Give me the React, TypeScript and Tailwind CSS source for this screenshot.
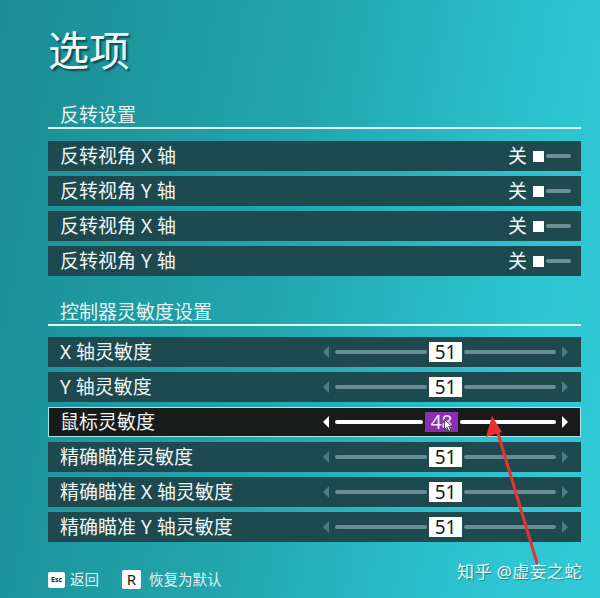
import React from "react";

const FONT = { fontFamily: '"Noto Sans", "Noto Sans CJK SC", sans-serif' };

function SectionHeader({ title }: { title: string }) {
  return (
    <div className="border-b-2 border-[#e6f4f4] pl-[12px] pr-[20px]">
      <div className="text-[19px] leading-[24px] text-[#e8f3f3]">{title}</div>
    </div>
  );
}

function Toggle() {
  return (
    <div className="flex items-center">
      <span className="text-[19px] leading-none text-[#eef5f5]">关</span>
      <span className="ml-[6px] h-[11px] w-[11px] bg-white" />
      <span className="ml-[2px] h-[4px] w-[25px] rounded-sm bg-[#6f8f90]" />
    </div>
  );
}

function ToggleRow({ label }: { label: string }) {
  return (
    <div className="flex h-[30px] items-center justify-between bg-[#1e4a4f] pl-[12px] pr-[10px]">
      <span className="text-[19px] leading-none text-[#eef5f5]">{label}</span>
      <Toggle />
    </div>
  );
}

function Arrow({ dir, color }: { dir: "l" | "r"; color: string }) {
  return (
    <svg width="6" height="12" viewBox="0 0 6 12" className="shrink-0">
      {dir === "l" ? (
        <polygon points="6,0 0,6 6,12" fill={color} />
      ) : (
        <polygon points="0,0 6,6 0,12" fill={color} />
      )}
    </svg>
  );
}

function Slider({ value, active }: { value: number; active?: boolean }) {
  const arrow = active ? "#ffffff" : "#4f7c80";
  const track = active ? "bg-white" : "bg-[#6a8c8e]";
  return (
    <div className="flex items-center">
      <Arrow dir="l" color={arrow} />
      <div className="ml-[6px] flex w-[221px] items-center">
        <div
          className={`h-[4px] rounded-sm ${track} ${active ? "w-[88px]" : "w-[92px]"}`}
        />
        {active ? (
          <div className="relative mx-[2px] flex h-[20px] w-[33px] items-center justify-center bg-[#8a2fb4] text-[19px] leading-none text-[#f0e6f7]">
            {value}
            <svg
              width="9"
              height="13"
              viewBox="0 0 9 13"
              className="absolute left-[19px] top-[7px]"
            >
              <polygon
                points="0.5,0.5 0.5,10.5 3,8.3 4.8,12.3 6.6,11.5 4.8,7.6 8,7.6"
                fill="#ffffff"
                stroke="#222"
                strokeWidth="0.8"
              />
            </svg>
          </div>
        ) : (
          <div className="mx-[2px] flex h-[20px] w-[33px] items-center justify-center bg-white text-[19px] leading-none text-[#1d1d1d]">
            {value}
          </div>
        )}
        <div className={`h-[4px] flex-1 rounded-sm ${track}`} />
      </div>
      <div className="ml-[6px]">
        <Arrow dir="r" color={arrow} />
      </div>
    </div>
  );
}

function SliderRow({
  label,
  value,
  active,
}: {
  label: string;
  value: number;
  active?: boolean;
}) {
  return (
    <div
      className={`flex h-[30px] items-center justify-between ${
        active
          ? "border border-[#a9e6ea] bg-[#191b1b] pl-[11px] pr-[12px]"
          : "bg-[#1e4a4f] pl-[12px] pr-[13px]"
      }`}
    >
      <span className="text-[19px] leading-none text-[#eef5f5]">{label}</span>
      <Slider value={value} active={active} />
    </div>
  );
}

export default function App() {
  return (
    <div
      className="relative h-[598px] w-[600px] overflow-hidden bg-[linear-gradient(100deg,#1b8c93_0%,#22a5ad_45%,#2cc3cf_80%,#31cbd8_100%)] pl-[48px] pr-[19px]"
      style={FONT}
    >
      <div className="pt-[26px] text-[41px] leading-[48px] text-[#f2f8f8] [text-shadow:2px_2px_2px_rgba(0,40,45,0.7)]">
        选项
      </div>

      <div className="mt-[29px]">
        <SectionHeader title="反转设置" />
      </div>
      <div className="mt-[12px] flex flex-col gap-[5px]">
        <ToggleRow label="反转视角 X 轴" />
        <ToggleRow label="反转视角 Y 轴" />
        <ToggleRow label="反转视角 X 轴" />
        <ToggleRow label="反转视角 Y 轴" />
      </div>

      <div className="mt-[24px]">
        <SectionHeader title="控制器灵敏度设置" />
      </div>
      <div className="mt-[11px] flex flex-col gap-[5px]">
        <SliderRow label="X 轴灵敏度" value={51} />
        <SliderRow label="Y 轴灵敏度" value={51} />
        <SliderRow label="鼠标灵敏度" value={48} active />
        <SliderRow label="精确瞄准灵敏度" value={51} />
        <SliderRow label="精确瞄准 X 轴灵敏度" value={51} />
        <SliderRow label="精确瞄准 Y 轴灵敏度" value={51} />
      </div>

      <div className="mt-[28px] flex items-center text-[14.5px] leading-none text-[#e2f2f2]">
        <span className="flex h-[16px] w-[17px] items-center justify-center rounded-[2px] bg-white text-[7px] font-bold text-[#222]">
          Esc
        </span>
        <span className="ml-[5px]">返回</span>
        <span className="ml-[23px] flex h-[19px] w-[19px] items-center justify-center rounded-[2px] bg-white text-[15px] text-[#222]">
          R
        </span>
        <span className="ml-[8px]">恢复为默认</span>
      </div>

      {/* watermark */}
      <div className="absolute left-[457px] top-[561px] text-[17px] leading-[22px] tracking-[0.4px] text-white/90 [text-shadow:1px_1px_1px_rgba(0,0,0,0.35)]">
        知乎 @虚妄之蛇
      </div>

      {/* red annotation arrow */}
      <svg
        className="pointer-events-none absolute left-0 top-0"
        width="600"
        height="598"
        viewBox="0 0 600 598"
      >
        <line
          x1="537"
          y1="563"
          x2="497"
          y2="430"
          stroke="#e8322e"
          strokeWidth="3"
          strokeLinecap="round"
        />
        <polygon points="492,416 486,437 502,432" fill="#e8322e" />
      </svg>
    </div>
  );
}
